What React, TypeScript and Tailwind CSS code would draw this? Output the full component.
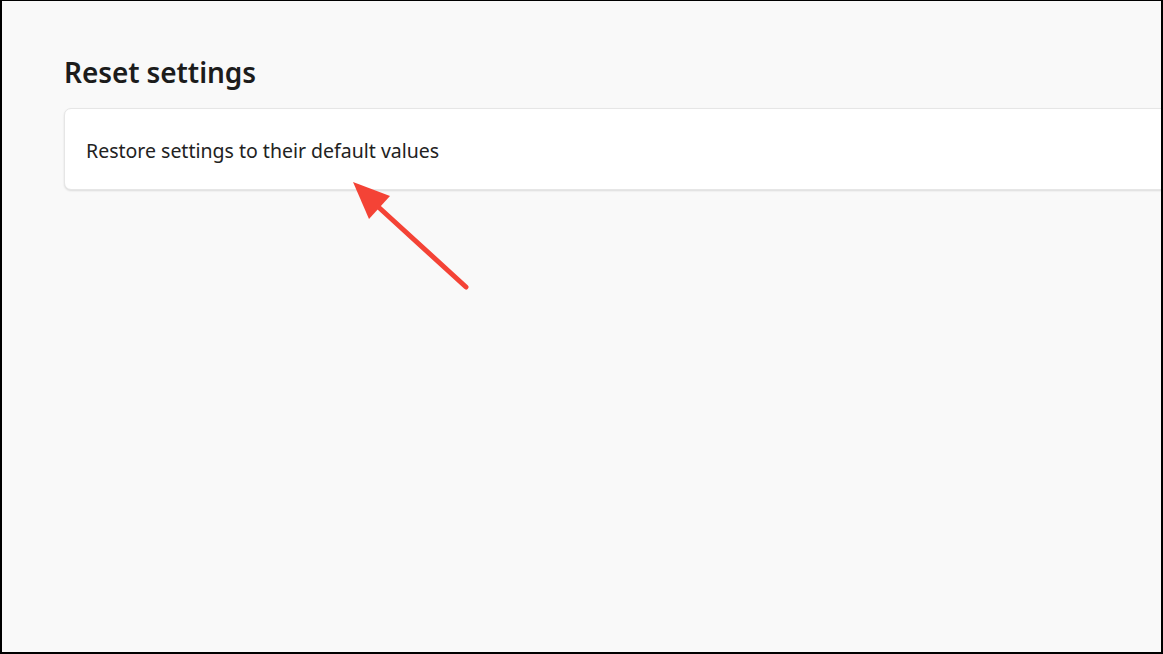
export default function App() {
  return (
    <div className="relative h-[654px] w-[1163px] overflow-hidden border-t border-r-2 border-b-2 border-l-2 border-black bg-[#f9f9f9] font-['Noto_Sans',sans-serif] text-[#1b1b1b]">
      <div className="pl-[62px] pt-[51px]">
        <h1 className="text-[28px] font-semibold leading-[40px] tracking-[-0.1px] text-[#1c1c1c]">Reset settings</h1>
        <div className="-mr-[20px] mt-[16px] flex h-[82px] items-center rounded-[7px] border border-[#e6e6e6] bg-white pl-[21px] shadow-[0_1px_2px_rgba(0,0,0,0.12)]">
          <span className="pt-[3px] text-[19.5px] leading-[26px] text-[#222]">Restore settings to their default values</span>
        </div>
      </div>

      {/* red annotation arrow */}
      <svg className="pointer-events-none absolute left-0 top-0" width="1163" height="654" viewBox="0 0 1163 654">
        <line x1="464" y1="286" x2="372" y2="202" stroke="#f44336" strokeWidth="5" strokeLinecap="round" />
        <polygon points="351,181 367,218 388,195" fill="#f44336" />
      </svg>
    </div>
  );
}
